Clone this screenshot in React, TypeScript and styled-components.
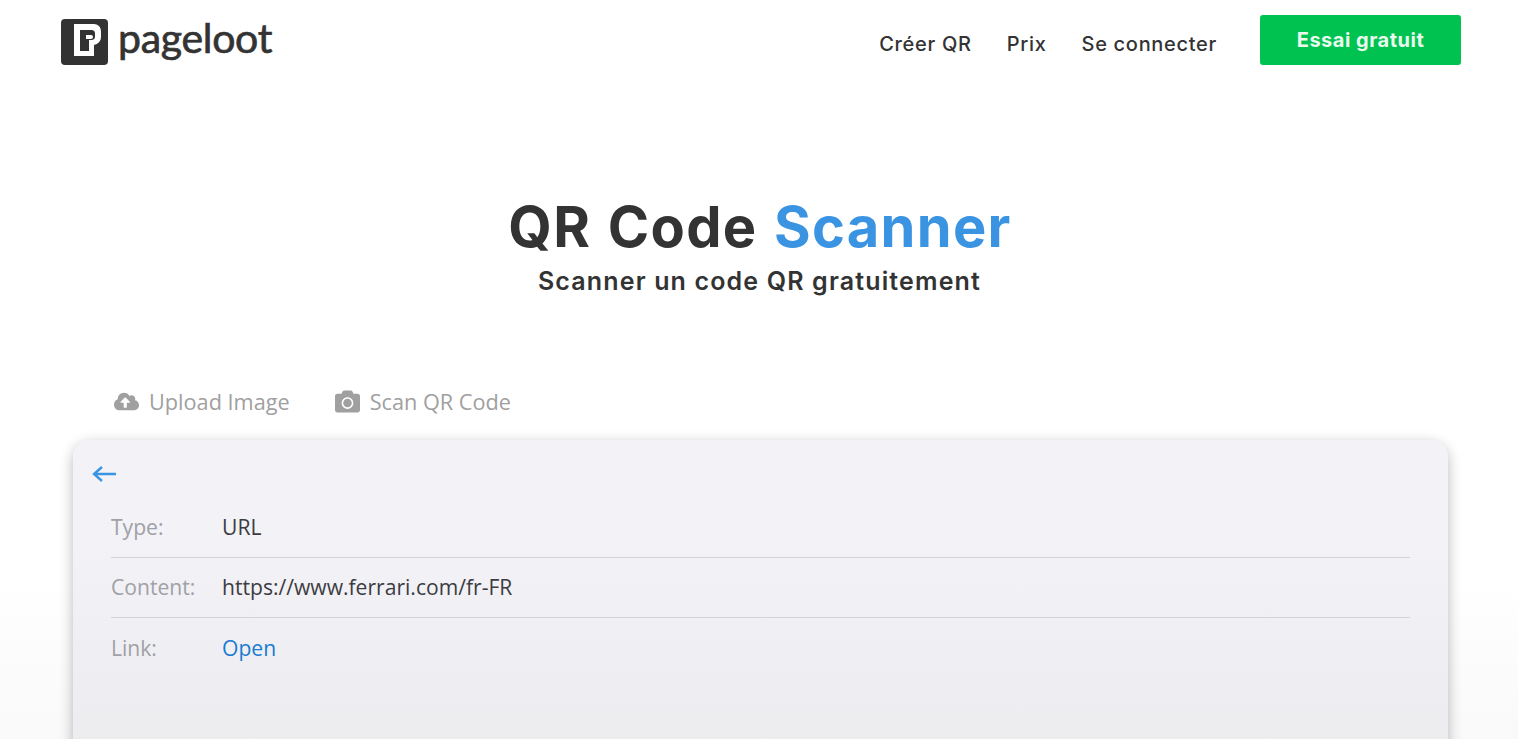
import React from 'react';
import styled, { createGlobalStyle } from 'styled-components';
import { FaCloudUploadAlt, FaCamera } from 'react-icons/fa';

const GlobalStyle = createGlobalStyle`
  html, body {
    margin: 0;
    padding: 0;
    height: 739px;
    overflow: hidden;
    background: #fff;
  }
`;

const Page = styled.div`
  height: 739px;
  overflow: hidden;
  background: linear-gradient(180deg, #fff 0, #fff 580px, #f9f9fa 739px);
  font-family: 'Inter', 'Liberation Sans', sans-serif;
`;

const Header = styled.header`
  display: flex;
  justify-content: space-between;
  align-items: flex-start;
  padding: 15px 57px 0 61px;
  height: 90px;
  box-sizing: border-box;
`;

const Brand = styled.div`
  display: flex;
  align-items: center;
  gap: 10px;
  margin-top: 4px;
`;

const BrandName = styled.span`
  font-family: 'Lato', sans-serif;
  font-size: 41px;
  line-height: 46px;
  color: #333;
  letter-spacing: -0.3px;
  -webkit-text-stroke: 0.7px #333;
  position: relative;
  top: -4px;
`;

const Nav = styled.nav`
  display: flex;
  align-items: center;
  height: 50px;
`;

const NavLink = styled.a`
  font-size: 20px;
  font-weight: 500;
  letter-spacing: 0.7px;
  color: #333;
  margin-right: 35px;
  margin-top: 8px;

  &:nth-child(3) {
    margin-right: 43px;
  }
`;

const TrialButton = styled.a`
  display: flex;
  align-items: center;
  justify-content: center;
  width: 201px;
  height: 50px;
  box-sizing: border-box;
  background: #00c250;
  border-radius: 3px;
  color: #e9fbef;
  font-size: 20px;
  font-weight: 700;
  letter-spacing: 0.5px;
`;

const Hero = styled.section`
  text-align: center;
  padding-top: 105px;
`;

const Title = styled.h1`
  margin: 0;
  padding-left: 2px;
  font-size: 56px;
  line-height: 64px;
  font-weight: 700;
  letter-spacing: 1.3px;
  word-spacing: 2px;
  color: #333;
`;

const Accent = styled.span`
  color: #3a94e2;
`;

const Subtitle = styled.p`
  margin: 4px 0 0;
  padding-left: 1px;
  font-size: 25px;
  line-height: 36px;
  font-weight: 600;
  letter-spacing: 1.15px;
  color: #333;
`;

const Tabs = styled.div`
  display: flex;
  gap: 45px;
  margin: 84px 0 0 114px;
  height: 36px;
`;

const Tab = styled.div`
  display: flex;
  align-items: center;
  gap: 10px;
  font-family: 'Open Sans', sans-serif;
  font-size: 21.7px;
  color: #a0a0a0;

  svg {
    width: 25px;
    height: 25px;
    fill: #a0a0a0;
  }
`;

const Card = styled.section`
  margin: 21px 70px 0 73px;
  height: 400px;
  padding: 24px 38px 0;
  box-sizing: border-box;
  background: linear-gradient(180deg, #f2f2f7 0, #f2f2f7 100px, #ededf0 300px);
  border-radius: 18px;
  box-shadow: 0 4px 14px rgba(0, 0, 0, 0.28);
`;

const BackArrow = styled.svg`
  display: block;
  width: 26px;
  height: 20px;
  margin-left: -19px;
  stroke: #3a94e2;
  fill: none;
  stroke-width: 2.4;
`;

const Row = styled.div<{ $last?: boolean }>`
  display: flex;
  align-items: center;
  height: 60px;
  padding-bottom: 2px;
  box-sizing: border-box;
  border-bottom: ${p => (p.$last ? 'none' : '1px solid #d4d4d8')};
  font-family: 'Open Sans', sans-serif;
  font-size: 21.1px;
`;

const FirstRow = styled(Row)`
  margin-top: 14px;
`;

const Label = styled.span`
  width: 111px;
  color: #a0a0a5;
`;

const Value = styled.span`
  color: #3c3c42;
`;

const OpenLink = styled.a`
  color: #1a7bd0;
`;

const LogoMark = () => (
  <svg width="47" height="46" viewBox="0 0 47 46">
    <rect width="47" height="46" rx="4" fill="#333" />
    <path
      fill="#fff"
      fillRule="evenodd"
      d="M13 5H33a7 7 0 0 1 7 7v6a8 8 0 0 1-7 8V37H13ZM19 11V32H28V21H31a3.5 3.5 0 0 0 3-3.5V14.500a3.500 3.500 0 0 0-3-3.500Z"
    />
    <path fill="#fff" d="M25 16h5a1.800 1.800 0 0 1 0 4H25Z" />
  </svg>
);

const App: React.FC = () => {
  return (
    <Page>
      <GlobalStyle />
      <Header>
        <Brand>
          <LogoMark />
          <BrandName>pageloot</BrandName>
        </Brand>
        <Nav>
          <NavLink>Créer QR</NavLink>
          <NavLink>Prix</NavLink>
          <NavLink>Se connecter</NavLink>
          <TrialButton>Essai gratuit</TrialButton>
        </Nav>
      </Header>
      <Hero>
        <Title>
          QR Code <Accent>Scanner</Accent>
        </Title>
        <Subtitle>Scanner un code QR gratuitement</Subtitle>
      </Hero>
      <Tabs>
        <Tab>
          <FaCloudUploadAlt />
          Upload Image
        </Tab>
        <Tab>
          <FaCamera />
          Scan QR Code
        </Tab>
      </Tabs>
      <Card>
        <BackArrow viewBox="0 0 26 20">
          <path d="M24 10H2M10 3l-8 7 8 7" />
        </BackArrow>
        <FirstRow>
          <Label>Type:</Label>
          <Value>URL</Value>
        </FirstRow>
        <Row>
          <Label>Content:</Label>
          <Value>https://www.ferrari.com/fr-FR</Value>
        </Row>
        <Row $last>
          <Label>Link:</Label>
          <OpenLink>Open</OpenLink>
        </Row>
      </Card>
    </Page>
  );
};

export default App;
